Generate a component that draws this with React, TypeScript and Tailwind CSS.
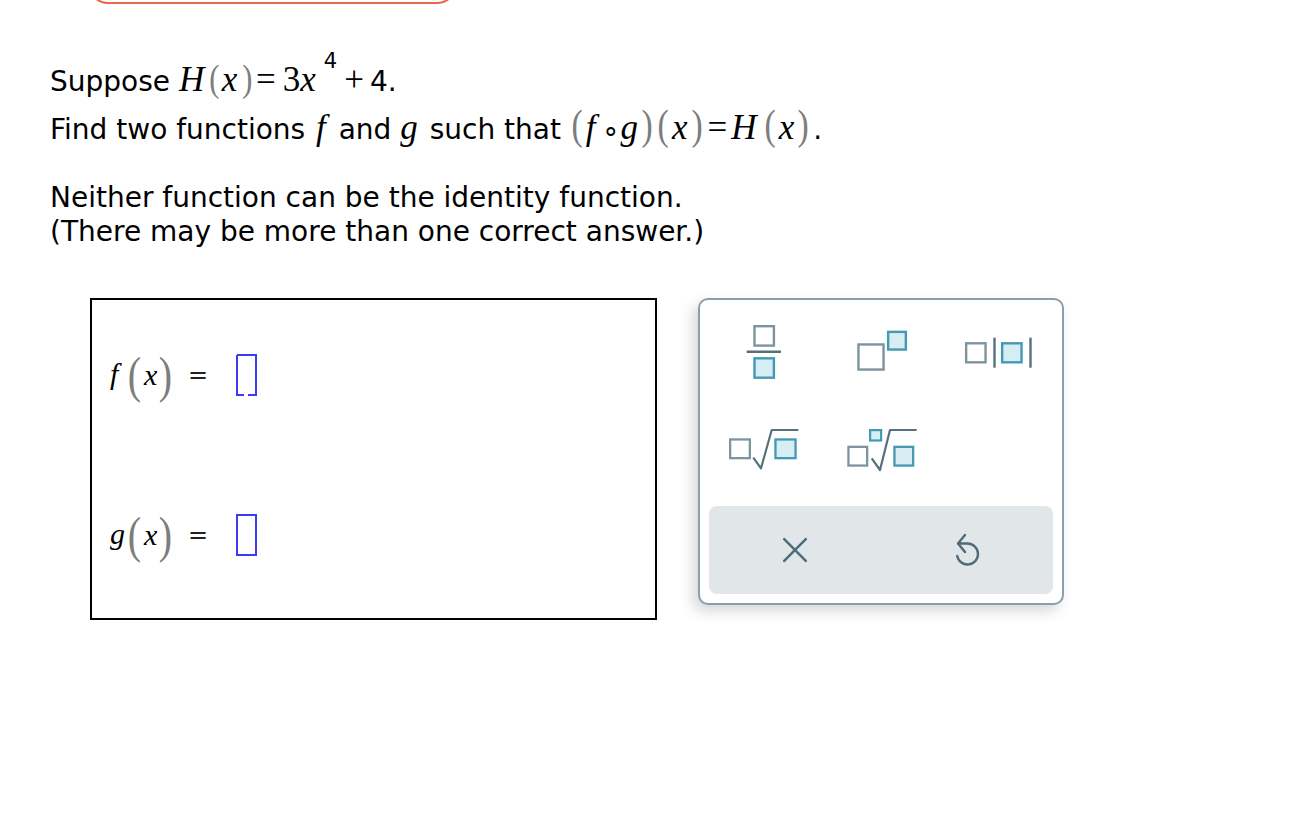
import React from "react";

const SANS = "font-['DejaVu_Sans',Verdana,sans-serif]";
const SERIF = "font-['Liberation_Serif','Times_New_Roman',serif]";

function P({ c, cls = "" }: { c: string; cls?: string }) {
  return (
    <span className={`${SERIF} inline-block text-[#7d7d7d] scale-x-[0.8] ${cls}`}>
      {c}
    </span>
  );
}

function I({ c, cls = "" }: { c: string; cls?: string }) {
  return <span className={`${SERIF} italic ${cls}`}>{c}</span>;
}

function R({ c, cls = "" }: { c: string; cls?: string }) {
  return <span className={`${SERIF} ${cls}`}>{c}</span>;
}

function Fraction() {
  return (
    <svg width="100" height="60" viewBox="0 0 100 60">
      <rect x="40.5" y="4.2" width="19.4" height="19.4" fill="none" stroke="#7d949e" strokeWidth="2.4" />
      <line x1="32.7" y1="29.7" x2="67" y2="29.7" stroke="#56707c" strokeWidth="2.6" />
      <rect x="40.5" y="36.3" width="19.4" height="19.4" fill="#d5edf3" stroke="#4499b3" strokeWidth="2.4" />
    </svg>
  );
}

function Superscript() {
  return (
    <svg width="100" height="60" viewBox="0 0 100 60">
      <rect x="26.45" y="22.45" width="25.1" height="25.1" fill="none" stroke="#7d949e" strokeWidth="2.4" />
      <rect x="56.15" y="9.85" width="17.7" height="17.7" fill="#d5edf3" stroke="#4499b3" strokeWidth="2.4" />
    </svg>
  );
}

function AbsVal() {
  return (
    <svg width="100" height="60" viewBox="0 0 100 60">
      <rect x="17.15" y="21.3" width="19.4" height="19" fill="none" stroke="#7d949e" strokeWidth="2.4" />
      <line x1="45.5" y1="15.7" x2="45.5" y2="45.7" stroke="#56707c" strokeWidth="2.4" />
      <rect x="53.15" y="21.3" width="19.4" height="19" fill="#d5edf3" stroke="#4499b3" strokeWidth="2.4" />
      <line x1="81.5" y1="15.7" x2="81.5" y2="45.7" stroke="#56707c" strokeWidth="2.4" />
    </svg>
  );
}

function Sqrt() {
  return (
    <svg width="100" height="60" viewBox="0 0 100 60">
      <rect x="16.15" y="19.45" width="19.7" height="18.7" fill="none" stroke="#7d949e" strokeWidth="2.3" />
      <polyline points="39.3,37.7 47,48.3 57.7,10 84.3,10" fill="none" stroke="#56707c" strokeWidth="2.2" strokeLinejoin="round" />
      <rect x="61.45" y="19.45" width="20.1" height="18.7" fill="#d5edf3" stroke="#4499b3" strokeWidth="2.3" />
    </svg>
  );
}

function NthRoot() {
  return (
    <svg width="100" height="60" viewBox="0 0 100 60">
      <rect x="16.45" y="26.85" width="18.7" height="18.7" fill="none" stroke="#7d949e" strokeWidth="2.3" />
      <rect x="38.1" y="10.1" width="11" height="10.4" fill="#d5edf3" stroke="#4499b3" strokeWidth="2.2" />
      <polyline points="39.7,38.3 48,50 58,10 84.7,10" fill="none" stroke="#56707c" strokeWidth="2.2" strokeLinejoin="round" />
      <rect x="62.45" y="26.85" width="18.7" height="18.7" fill="#d5edf3" stroke="#4499b3" strokeWidth="2.3" />
    </svg>
  );
}

function XIcon() {
  return (
    <svg width="26" height="26" viewBox="0 0 26 26">
      <line x1="2.2" y1="2.2" x2="23.8" y2="23.8" stroke="#4d6b78" strokeWidth="2.5" strokeLinecap="round" />
      <line x1="23.8" y1="2.2" x2="2.2" y2="23.8" stroke="#4d6b78" strokeWidth="2.5" strokeLinecap="round" />
    </svg>
  );
}

function UndoIcon() {
  return (
    <svg width="26" height="36" viewBox="0 0 26 36">
      <path
        d="M11 3 L4 11.5 L11 20 M4 11.5 H13.5 A10.5 10.5 0 1 1 3.2 24"
        fill="none"
        stroke="#4d6b78"
        strokeWidth="2.4"
        strokeLinecap="round"
        strokeLinejoin="round"
      />
    </svg>
  );
}

function AnswerBox({ dashed }: { dashed?: boolean }) {
  return (
    <svg width="24" height="45" viewBox="0 0 24 45">
      {dashed ? (
        <path d="M2 2 H21 V42 H13 M9 42 H2 V2" fill="none" stroke="#3b3bf5" strokeWidth="2" />
      ) : (
        <rect x="2" y="2" width="19" height="40" fill="none" stroke="#3b3bf5" strokeWidth="2" />
      )}
    </svg>
  );
}

function FuncRow({ name, dashed }: { name: string; dashed?: boolean }) {
  return (
    <div className="flex h-[80px] items-center">
      <div className="flex w-[64px] items-center">
        <span className="w-[18px]">
          <I c={name} cls="text-[30px] leading-none" />
        </span>
        <P c="(" cls="text-[50px] leading-none text-[#6e6e6e]" />
        <I c="x" cls="ml-[1px] text-[30px] leading-none" />
        <P c=")" cls="text-[50px] leading-none text-[#6e6e6e]" />
      </div>
      <span className={`${SANS} ml-[14px] text-[24px] leading-none text-[#222]`}>=</span>
      <span className="ml-[27px] flex">
        <AnswerBox dashed={dashed} />
      </span>
    </div>
  );
}

export default function App() {
  return (
    <div className={`${SANS} relative min-h-[824px] w-[1296px] bg-white text-black`}>
      <div className="h-[4px] overflow-hidden pl-[88px]">
        <div className="-mt-[38px] h-[42px] w-[369px] rounded-[20px] border-2 border-[#e2694a]" />
      </div>

      <div className="pl-[50px] pt-[54px] text-[28px]">
        <div className="h-[48px] whitespace-nowrap leading-[48px]">
          <span>Suppose </span>
          <I c="H" cls="text-[35px] leading-[0px]" />
          <P c="(" cls="ml-[4px] text-[38px] leading-[0px]" />
          <I c="x" cls="ml-[1px] text-[35px] leading-[0px]" />
          <P c=")" cls="ml-[4px] text-[38px] leading-[0px]" />
          <R c="=" cls="ml-[2px] text-[35px] leading-[0px]" />
          <R c="3" cls="ml-[7px] text-[35px] leading-[0px]" />
          <I c="x" cls="text-[35px] leading-[0px]" />
          <span className="relative -top-[23px] ml-[8px] text-[21px] leading-[0px]">4</span>
          <R c="+" cls="ml-[7px] text-[35px] leading-[0px]" />
          <span className="ml-[6px]">4.</span>
        </div>
        <div className="h-[48px] whitespace-nowrap leading-[48px]">
          <span>Find two functions </span>
          <I c="f" cls="ml-[2px] mr-[4px] text-[35px] leading-[0px]" />
          <span> and </span>
          <I c="g" cls="mr-[3px] text-[35px] leading-[0px]" />
          <span> such that </span>
          <P c="(" cls="text-[42px] leading-[0px]" />
          <I c="f" cls="ml-[2px] text-[35px] leading-[0px]" />
          <R c="∘" cls="ml-[6px] text-[28px] leading-[0px]" />
          <I c="g" cls="ml-[1px] text-[35px] leading-[0px]" />
          <P c=")" cls="ml-[2px] text-[42px] leading-[0px]" />
          <P c="(" cls="ml-[2px] text-[42px] leading-[0px]" />
          <I c="x" cls="ml-[2px] text-[35px] leading-[0px]" />
          <P c=")" cls="ml-[2px] text-[42px] leading-[0px]" />
          <R c="=" cls="ml-[4px] text-[35px] leading-[0px]" />
          <I c="H" cls="ml-[4px] text-[35px] leading-[0px]" />
          <P c="(" cls="ml-[6px] text-[42px] leading-[0px]" />
          <I c="x" cls="ml-[2px] text-[35px] leading-[0px]" />
          <P c=")" cls="ml-[2px] text-[42px] leading-[0px]" />
          <span className="ml-[3px]">.</span>
        </div>

        <div className="mt-[27px] leading-[34px]">
          <div>Neither function can be the identity function.</div>
          <div>(There may be more than one correct answer.)</div>
        </div>
      </div>

      <div className="mt-[49px] flex items-start pl-[90px]">
        <div className="flex h-[322px] w-[567px] flex-col gap-[80px] border-2 border-black pl-[18px] pt-[35px]">
          <FuncRow name="f" dashed />
          <FuncRow name="g" />
        </div>

        <div className="ml-[41px] flex h-[307px] w-[366px] flex-col rounded-[10px] border-2 border-[#8a9fa9] bg-white px-[9px] pb-[9px] pt-[3px] shadow-[-5px_6px_14px_rgba(0,0,0,0.16)]">
          <div className="grid grid-cols-[110px_126px_108px] grid-rows-[98px_98px]">
            <div className="flex items-center justify-center"><Fraction /></div>
            <div className="flex items-center justify-center"><Superscript /></div>
            <div className="flex items-center justify-center"><AbsVal /></div>
            <div className="flex items-center justify-center"><Sqrt /></div>
            <div className="flex items-center justify-center"><NthRoot /></div>
            <div />
          </div>
          <div className="mt-[7px] flex h-[88px] rounded-[8px] bg-[#e1e6e9]">
            <div className="flex flex-1 items-center justify-center"><XIcon /></div>
            <div className="flex flex-1 items-center justify-center"><UndoIcon /></div>
          </div>
        </div>
      </div>
    </div>
  );
}
